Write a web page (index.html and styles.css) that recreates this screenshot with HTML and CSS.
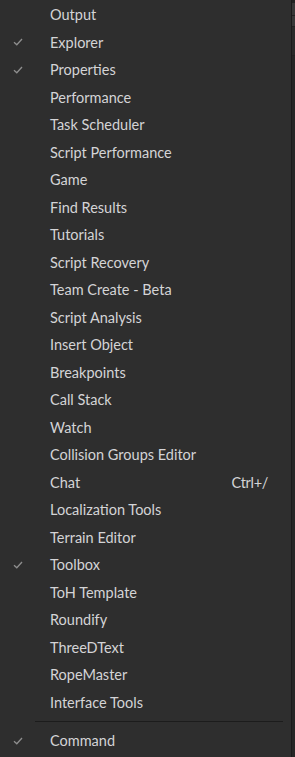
FILE: index.html
```html
<!DOCTYPE html>
<html>
<head>
<meta charset="utf-8">
<link rel="stylesheet" href="styles.css">
</head>
<body>
<div class="frame">
  <div class="menu">
    <div class="item"><span class="check"></span><span class="label">Output</span></div>
    <div class="item"><span class="check"><svg viewBox="0 0 10 8" width="10" height="8"><path d="M1 4.2 L3.8 6.8 L9 1" fill="none" stroke="currentColor" stroke-width="1.3"/></svg></span><span class="label">Explorer</span></div>
    <div class="item"><span class="check"><svg viewBox="0 0 10 8" width="10" height="8"><path d="M1 4.2 L3.8 6.8 L9 1" fill="none" stroke="currentColor" stroke-width="1.3"/></svg></span><span class="label">Properties</span></div>
    <div class="item"><span class="check"></span><span class="label">Performance</span></div>
    <div class="item"><span class="check"></span><span class="label">Task Scheduler</span></div>
    <div class="item"><span class="check"></span><span class="label">Script Performance</span></div>
    <div class="item"><span class="check"></span><span class="label">Game</span></div>
    <div class="item"><span class="check"></span><span class="label">Find Results</span></div>
    <div class="item"><span class="check"></span><span class="label">Tutorials</span></div>
    <div class="item"><span class="check"></span><span class="label">Script Recovery</span></div>
    <div class="item"><span class="check"></span><span class="label">Team Create - Beta</span></div>
    <div class="item"><span class="check"></span><span class="label">Script Analysis</span></div>
    <div class="item"><span class="check"></span><span class="label">Insert Object</span></div>
    <div class="item"><span class="check"></span><span class="label">Breakpoints</span></div>
    <div class="item"><span class="check"></span><span class="label">Call Stack</span></div>
    <div class="item"><span class="check"></span><span class="label">Watch</span></div>
    <div class="item"><span class="check"></span><span class="label">Collision Groups Editor</span></div>
    <div class="item"><span class="check"></span><span class="label">Chat</span><span class="shortcut">Ctrl+/</span></div>
    <div class="item"><span class="check"></span><span class="label">Localization Tools</span></div>
    <div class="item"><span class="check"></span><span class="label">Terrain Editor</span></div>
    <div class="item"><span class="check"><svg viewBox="0 0 10 8" width="10" height="8"><path d="M1 4.2 L3.8 6.8 L9 1" fill="none" stroke="currentColor" stroke-width="1.3"/></svg></span><span class="label">Toolbox</span></div>
    <div class="item"><span class="check"></span><span class="label">ToH Template</span></div>
    <div class="item"><span class="check"></span><span class="label">Roundify</span></div>
    <div class="item"><span class="check"></span><span class="label">ThreeDText</span></div>
    <div class="item"><span class="check"></span><span class="label">RopeMaster</span></div>
    <div class="item"><span class="check"></span><span class="label">Interface Tools</span></div>
    <div class="separator"></div>
    <div class="item"><span class="check"><svg viewBox="0 0 10 8" width="10" height="8"><path d="M1 4.2 L3.8 6.8 L9 1" fill="none" stroke="currentColor" stroke-width="1.3"/></svg></span><span class="label">Command</span></div>
  </div>
  <div class="strip">
    <div class="seg s1"></div>
    <div class="seg s2"></div>
    <div class="seg s3"></div>
    <div class="seg s4"></div>
  </div>
</div>
</body>
</html>
```
FILE: styles.css
```css
html, body {
  margin: 0;
  padding: 0;
  background: #2e2e2e;
}
.frame {
  display: flex;
  width: 295px;
  height: 757px;
  overflow: hidden;
}
.menu {
  width: 291px;
  flex: none;
  background: #2e2e2e;
  padding-top: 0.75px;
  box-sizing: border-box;
  font-family: Lato, "Noto Sans", sans-serif;
  font-size: 14.5px;
  color: #d4d4d6;
}
.item {
  height: 27.5px;
  display: flex;
  align-items: center;
  padding-right: 23px;
}
.check {
  width: 50px;
  flex: none;
  display: flex;
  align-items: center;
  padding-left: 13px;
  box-sizing: border-box;
  color: #8e8e8e;
}
.check svg {
  display: block;
}
.label {
  flex: 1;
  white-space: nowrap;
}
.shortcut {
  white-space: nowrap;
  letter-spacing: -0.3px;
}
.separator {
  height: 11px;
  display: flex;
  align-items: center;
  padding: 0 8px 0 35px;
}
.separator::before {
  content: "";
  flex: 1;
  height: 1px;
  background: #1c1c1c;
}
.strip {
  flex: 1;
  border-left: 1px solid #1b1b1b;
  background: #222;
  display: flex;
  flex-direction: column;
  gap: 1px;
}
.seg {
  background: #383838;
}
.s1 { height: 12px; margin-top: 3px; }
.s2 { height: 10px; }
.s3 { height: 28px; background: #2a2a2a; }
.s4 { flex: 1; background: #262626; }
```
